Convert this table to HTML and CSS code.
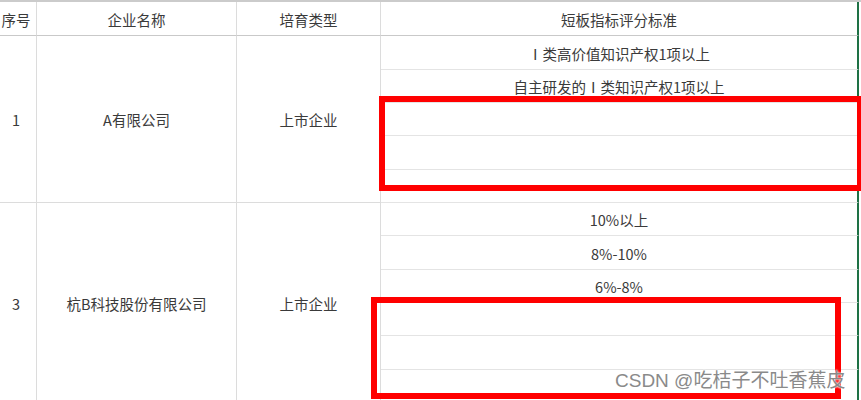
FILE: index.html
```
<!DOCTYPE html>
<html lang="zh-CN">
  <head>
    <meta charset="UTF-8" />
    <meta name="viewport" content="width=device-width, initial-scale=1.0" />
    <title>短板指标评分标准</title>
    <link rel="stylesheet" href="styles.css">
  </head>
  <body>
    <div class="sheet">
      <div class="cell head">序号</div>
      <div class="cell head">企业名称</div>
      <div class="cell head">培育类型</div>
      <div class="cell head last">短板指标评分标准</div>

      <div class="cell merged-a">1</div>
      <div class="cell merged-a">A有限公司</div>
      <div class="cell merged-a">上市企业</div>
      <div class="cell last">Ⅰ类高价值知识产权1项以上</div>
      <div class="cell last">自主研发的Ⅰ类知识产权1项以上</div>
      <div class="cell last"></div>
      <div class="cell last"></div>
      <div class="cell last"></div>

      <div class="cell merged-b">3</div>
      <div class="cell merged-b">杭B科技股份有限公司</div>
      <div class="cell merged-b">上市企业</div>
      <div class="cell last">10%以上</div>
      <div class="cell last">8%-10%</div>
      <div class="cell last">6%-8%</div>
      <div class="cell last"></div>
      <div class="cell last"></div>
      <div class="cell last"></div>
    </div>

    <div class="mark mark-one"></div>
    <div class="mark mark-two"></div>
    <div class="watermark">CSDN @吃桔子不吐香蕉皮</div>
  </body>
</html>
```

FILE: styles.css
```
* {
  margin: 0;
  padding: 0;
  box-sizing: border-box;
}

body {
  width: 861px;
  height: 400px;
  overflow: hidden;
  background-color: #ffffff;
  font-family: "Noto Sans CJK SC", "Noto Sans", sans-serif;
  font-size: 14.5px;
  color: #3a3a3a;
  position: relative;
}

.sheet {
  display: grid;
  grid-template-columns: 41px 200px 144px 478px;
  grid-template-rows: 34px 34px 33px 33px 34px 33px 33px 34px 33px 33px 34px 33px;
  margin-left: -4px;
  border-top: 2px solid #cbcbcb;
  width: 865px;
}

.cell {
  display: flex;
  align-items: center;
  justify-content: center;
  padding-top: 1px;
  border-right: 1px solid #dcdcdc;
  border-bottom: 1px solid #e4e4e4;
  white-space: nowrap;
}

.cell.last {
  border-right: 2px solid #1e7145;
}

.head {
  border-bottom-color: #c9c9c9;
}

.merged-a {
  grid-row: span 5;
  border-bottom-color: #dcdcdc;
}

.merged-b {
  grid-row: span 6;
}

.mark {
  position: absolute;
  border: 6px solid #ff0000;
}

.mark-one {
  left: 379px;
  top: 96px;
  width: 484px;
  height: 95px;
}

.mark-two {
  left: 371px;
  top: 297px;
  width: 470px;
  height: 102px;
}

.watermark {
  position: absolute;
  left: 615px;
  top: 368px;
  font-family: "Liberation Sans", "Noto Sans CJK SC", sans-serif;
  font-size: 19px;
  line-height: 26px;
  color: #8a8a8a;
  text-shadow: 0 0 2px #ffffff, 0 0 2px #ffffff;
  white-space: nowrap;
}
```
